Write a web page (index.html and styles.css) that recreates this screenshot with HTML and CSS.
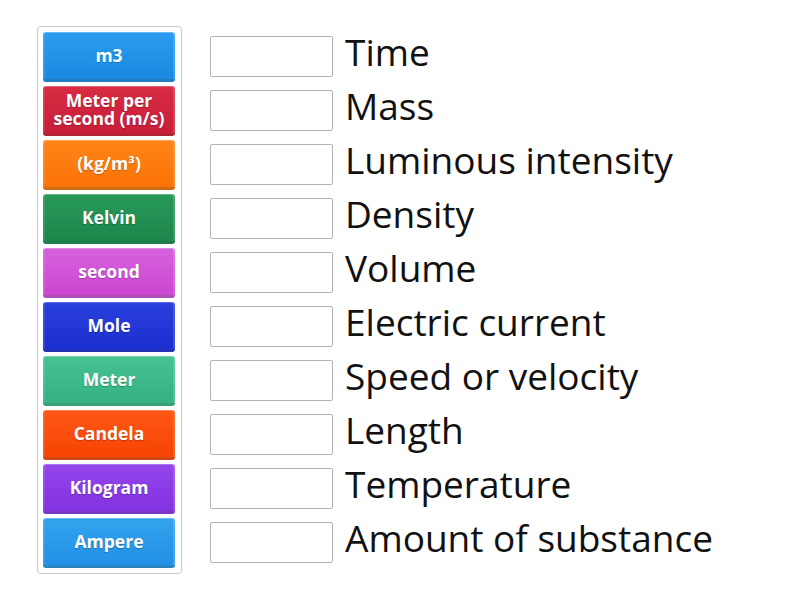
FILE: index.html
```html
<!DOCTYPE html>
<html>
<head>
<meta charset="utf-8">
<link rel="stylesheet" href="styles.css">
</head>
<body>
<div class="page">
  <div class="bank">
    <div class="tile c1">m3</div>
    <div class="tile c2">Meter per second (m/s)</div>
    <div class="tile c3">(kg/m³)</div>
    <div class="tile c4">Kelvin</div>
    <div class="tile c5">second</div>
    <div class="tile c6">Mole</div>
    <div class="tile c7">Meter</div>
    <div class="tile c8">Candela</div>
    <div class="tile c9">Kilogram</div>
    <div class="tile c10">Ampere</div>
  </div>
  <div class="targets">
    <div class="row"><div class="slot"></div><div class="label">Time</div></div>
    <div class="row"><div class="slot"></div><div class="label">Mass</div></div>
    <div class="row"><div class="slot"></div><div class="label">Luminous intensity</div></div>
    <div class="row"><div class="slot"></div><div class="label">Density</div></div>
    <div class="row"><div class="slot"></div><div class="label">Volume</div></div>
    <div class="row"><div class="slot"></div><div class="label">Electric current</div></div>
    <div class="row"><div class="slot"></div><div class="label">Speed or velocity</div></div>
    <div class="row"><div class="slot"></div><div class="label">Length</div></div>
    <div class="row"><div class="slot"></div><div class="label">Temperature</div></div>
    <div class="row"><div class="slot"></div><div class="label">Amount of substance</div></div>
  </div>
</div>
</body>
</html>
```
FILE: styles.css
```css
html, body {
  margin: 0;
  padding: 0;
  background: #ffffff;
}
body {
  font-family: "Open Sans", "DejaVu Sans", sans-serif;
}
.page {
  display: flex;
  align-items: flex-start;
  padding: 26px 0 0 37px;
}
.bank {
  width: 132px;
  padding: 5px 6px 5px 5px;
  border: 1px solid #c8c8c8;
  border-radius: 4px;
  display: flex;
  flex-direction: column;
  gap: 4px;
}
.tile {
  box-sizing: border-box;
  height: 50px;
  border-radius: 3px;
  display: flex;
  align-items: center;
  justify-content: center;
  text-align: center;
  color: #ffffff;
  font-weight: 700;
  font-size: 17.5px;
  line-height: 18px;
  padding: 0 4px 2px;
  text-shadow: 0 1px 1px rgba(0,0,0,0.25);
  border-bottom: 3px solid rgba(0,0,0,0.18);
  box-shadow: inset 0 1px 0 rgba(255,255,255,0.25), inset -2px 0 0 rgba(255,255,255,0.15), inset 2px 0 0 rgba(255,255,255,0.1);
}
.c1 { background: linear-gradient(#2b9cf0, #1a8ae0); }
.c2 { background: linear-gradient(#d82b44, #c81e38); }
.c3 { background: linear-gradient(#ff8418, #fb7306); }
.c4 { background: linear-gradient(#28995a, #1c874a); }
.c5 { background: linear-gradient(#d662dc, #cc46d2); }
.c6 { background: linear-gradient(#2a40dc, #1c2fd0); }
.c7 { background: linear-gradient(#46c292, #36b282); }
.c8 { background: linear-gradient(#ff5716, #f64404); }
.c9 { background: linear-gradient(#9446ec, #8232e0); }
.c10 { background: linear-gradient(#34a3ee, #2290e4); }

.targets {
  margin-left: 28px;
  padding-top: 10px;
  display: flex;
  flex-direction: column;
  gap: 13px;
}
.row {
  display: flex;
  align-items: center;
  height: 41px;
}
.slot {
  box-sizing: border-box;
  width: 123px;
  height: 41px;
  border: 1px solid #b4b4b4;
  border-radius: 2px;
  flex: none;
}
.label {
  margin-left: 12px;
  font-size: 37px;
  line-height: 41px;
  color: #111111;
  white-space: nowrap;
  position: relative;
  top: -5px;
}
```
